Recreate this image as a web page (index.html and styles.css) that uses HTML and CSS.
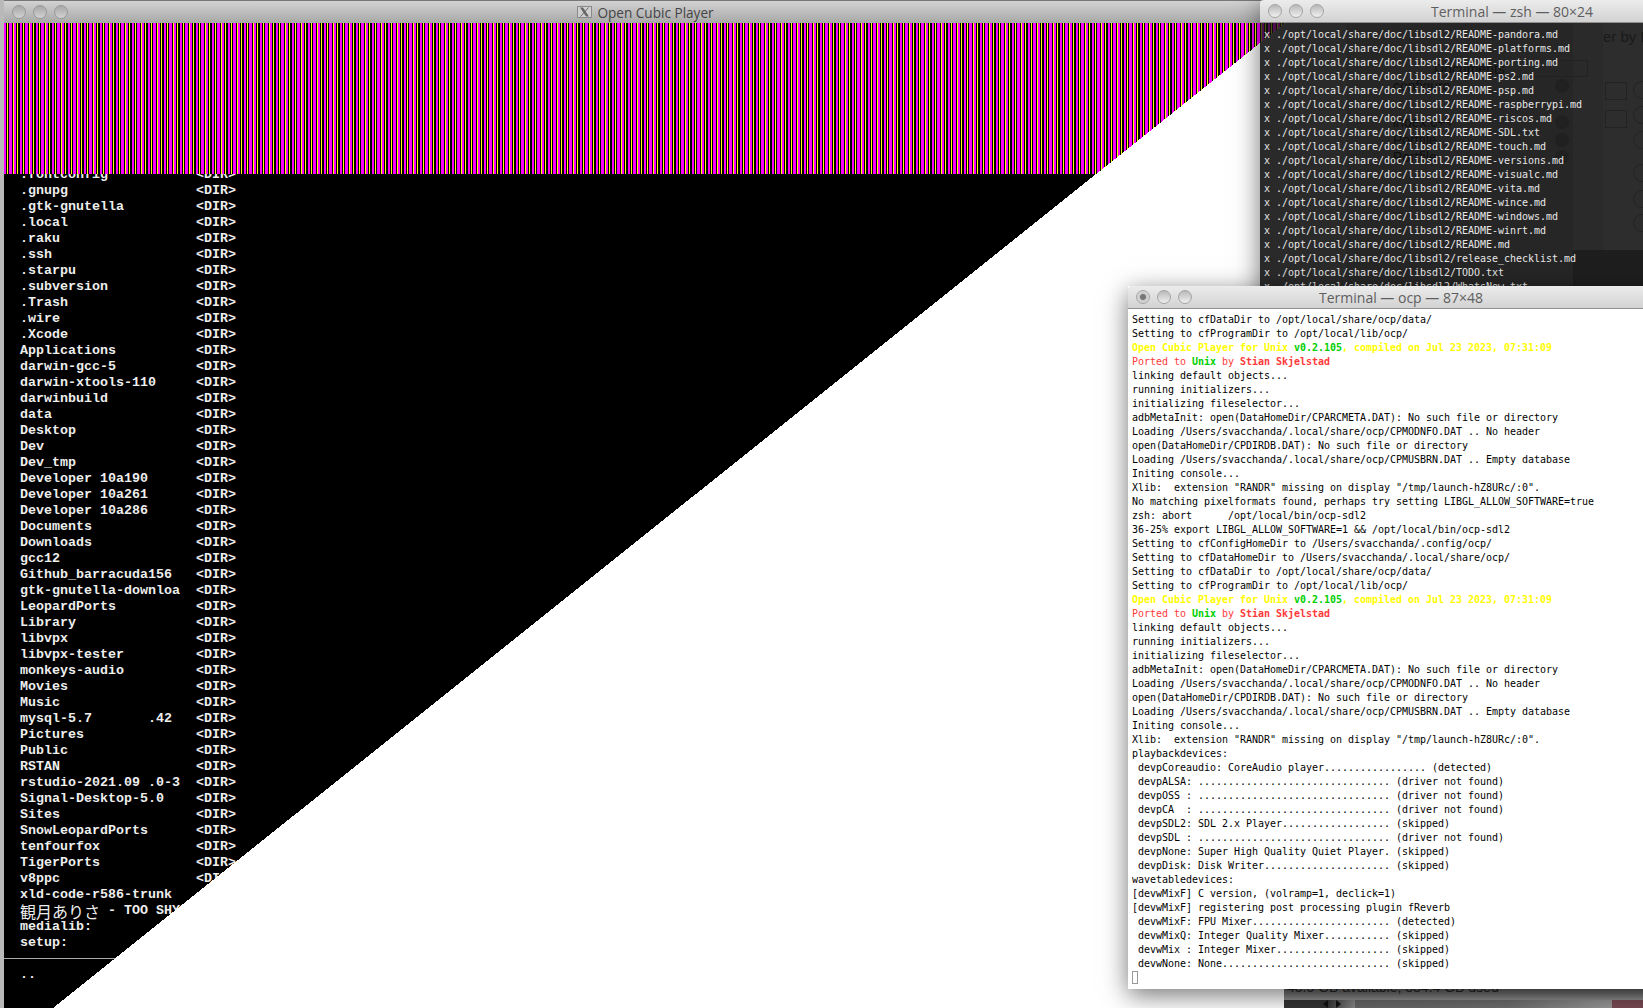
FILE: index.html
```html
<!DOCTYPE html>
<html lang="en">
<head>
    <meta charset="UTF-8">
    <title>Open Cubic Player</title>
    <link rel="stylesheet" href="styles.css">
</head>
<body>
    <!-- SDL window -->
    <div class="window main">
        <div class="titlebar main-title">
            <div class="lights">
                <span class="light"></span><span class="light"></span><span class="light"></span>
            </div>
            <svg class="x-icon" width="15" height="12" viewBox="0 0 15 12">
                <rect x="0.5" y="0.5" width="14" height="11" fill="#d0d0d0" stroke="#8a8a8a"/>
                <path d="M3 1.5 L6 1.5 L12 10.5 L9 10.5 Z" fill="#666"/>
                <path d="M11.5 1.5 L3.5 10.5" stroke="#666" stroke-width="1" fill="none"/>
            </svg>
            <span class="title-text">Open Cubic Player</span>
        </div>
        <div class="stripes"></div>
        <div class="listing">
            <div class="row"><span class="name">.fontconfig</span><span>&lt;DIR&gt;</span></div>
            <div class="row"><span class="name">.gnupg</span><span>&lt;DIR&gt;</span></div>
            <div class="row"><span class="name">.gtk-gnutella</span><span>&lt;DIR&gt;</span></div>
            <div class="row"><span class="name">.local</span><span>&lt;DIR&gt;</span></div>
            <div class="row"><span class="name">.raku</span><span>&lt;DIR&gt;</span></div>
            <div class="row"><span class="name">.ssh</span><span>&lt;DIR&gt;</span></div>
            <div class="row"><span class="name">.starpu</span><span>&lt;DIR&gt;</span></div>
            <div class="row"><span class="name">.subversion</span><span>&lt;DIR&gt;</span></div>
            <div class="row"><span class="name">.Trash</span><span>&lt;DIR&gt;</span></div>
            <div class="row"><span class="name">.wire</span><span>&lt;DIR&gt;</span></div>
            <div class="row"><span class="name">.Xcode</span><span>&lt;DIR&gt;</span></div>
            <div class="row"><span class="name">Applications</span><span>&lt;DIR&gt;</span></div>
            <div class="row"><span class="name">darwin-gcc-5</span><span>&lt;DIR&gt;</span></div>
            <div class="row"><span class="name">darwin-xtools-110</span><span>&lt;DIR&gt;</span></div>
            <div class="row"><span class="name">darwinbuild</span><span>&lt;DIR&gt;</span></div>
            <div class="row"><span class="name">data</span><span>&lt;DIR&gt;</span></div>
            <div class="row"><span class="name">Desktop</span><span>&lt;DIR&gt;</span></div>
            <div class="row"><span class="name">Dev</span><span>&lt;DIR&gt;</span></div>
            <div class="row"><span class="name">Dev_tmp</span><span>&lt;DIR&gt;</span></div>
            <div class="row"><span class="name">Developer 10a190</span><span>&lt;DIR&gt;</span></div>
            <div class="row"><span class="name">Developer 10a261</span><span>&lt;DIR&gt;</span></div>
            <div class="row"><span class="name">Developer 10a286</span><span>&lt;DIR&gt;</span></div>
            <div class="row"><span class="name">Documents</span><span>&lt;DIR&gt;</span></div>
            <div class="row"><span class="name">Downloads</span><span>&lt;DIR&gt;</span></div>
            <div class="row"><span class="name">gcc12</span><span>&lt;DIR&gt;</span></div>
            <div class="row"><span class="name">Github_barracuda156</span><span>&lt;DIR&gt;</span></div>
            <div class="row"><span class="name">gtk-gnutella-downloa</span><span>&lt;DIR&gt;</span></div>
            <div class="row"><span class="name">LeopardPorts</span><span>&lt;DIR&gt;</span></div>
            <div class="row"><span class="name">Library</span><span>&lt;DIR&gt;</span></div>
            <div class="row"><span class="name">libvpx</span><span>&lt;DIR&gt;</span></div>
            <div class="row"><span class="name">libvpx-tester</span><span>&lt;DIR&gt;</span></div>
            <div class="row"><span class="name">monkeys-audio</span><span>&lt;DIR&gt;</span></div>
            <div class="row"><span class="name">Movies</span><span>&lt;DIR&gt;</span></div>
            <div class="row"><span class="name">Music</span><span>&lt;DIR&gt;</span></div>
            <div class="row"><span class="name">mysql-5.7       .42</span><span>&lt;DIR&gt;</span></div>
            <div class="row"><span class="name">Pictures</span><span>&lt;DIR&gt;</span></div>
            <div class="row"><span class="name">Public</span><span>&lt;DIR&gt;</span></div>
            <div class="row"><span class="name">RSTAN</span><span>&lt;DIR&gt;</span></div>
            <div class="row"><span class="name">rstudio-2021.09 .0-3</span><span>&lt;DIR&gt;</span></div>
            <div class="row"><span class="name">Signal-Desktop-5.0</span><span>&lt;DIR&gt;</span></div>
            <div class="row"><span class="name">Sites</span><span>&lt;DIR&gt;</span></div>
            <div class="row"><span class="name">SnowLeopardPorts</span><span>&lt;DIR&gt;</span></div>
            <div class="row"><span class="name">tenfourfox</span><span>&lt;DIR&gt;</span></div>
            <div class="row"><span class="name">TigerPorts</span><span>&lt;DIR&gt;</span></div>
            <div class="row"><span class="name">v8ppc</span><span>&lt;DIR&gt;</span></div>
            <div class="row"><span class="name">xld-code-r586-trunk</span></div>
            <div class="row"><span class="name"><span class="cjk">観月ありさ</span> - TOO SHY</span></div>
            <div class="row"><span class="name">medialib:</span></div>
            <div class="row"><span class="name">setup:</span></div>
            <div class="rule"></div>
            <div class="row"><span class="name">..</span></div>
        </div>
    </div>

    <!-- the black/striped surface is only half drawn -->
    <svg class="wipe" width="1643" height="1008" viewBox="0 0 1643 1008">
        <polygon points="1285,23 1643,23 1643,1008 53,1008" fill="#fff" shape-rendering="crispEdges"/>
    </svg>

    <!-- window behind the dark terminal, seen through it -->
    <div class="finder">
        <div class="ghost ghost-pane"></div>
        <div class="ghost ghost-right"></div>
        <div class="ghost ghost-low"></div>
        <div class="ghost ghost-field">Documents</div>
        <div class="ghost ghost-file file-1">configure</div>
        <div class="ghost ghost-file file-2">index.c++</div>
        <div class="ghost ghost-file file-3">Portfile</div>
        <div class="ghost ghost-file file-4">Portfile</div>
        <div class="ghost ghost-del del-1"></div>
        <div class="ghost ghost-del del-2"></div>
        <div class="ghost ghost-del del-3"></div>
        <div class="ghost ghost-del del-4"></div>
        <div class="ghost ghost-sort">er by N</div>
        <div class="ghost ghost-select select-1"></div>
        <div class="ghost ghost-select select-2"></div>
        <div class="ghost ghost-round round-1"></div>
        <div class="ghost ghost-round round-2"></div>
        <div class="ghost ghost-round round-3"></div>
        <div class="ghost ghost-round round-4"></div>
        <div class="ghost ghost-round round-5"></div>
        <div class="ghost ghost-round round-6"></div>
        <div class="status">43.5 GB available, 334.4 GB used</div>
        <div class="scrollbar">
            <div class="scroll-arrows"><span class="arrow-left"></span><span class="arrow-right"></span></div>
            <div class="scroll-track"></div>
            <div class="scroll-end"></div>
        </div>
    </div>

    <div class="window term term-back">
        <div class="titlebar term-title">
            <div class="lights">
                <span class="light"></span><span class="light"></span><span class="light"></span>
            </div>
            <span class="title-text">Terminal — zsh — 80×24</span>
        </div>
<pre class="term-body dark">x ./opt/local/share/doc/libsdl2/README-pandora.md
x ./opt/local/share/doc/libsdl2/README-platforms.md
x ./opt/local/share/doc/libsdl2/README-porting.md
x ./opt/local/share/doc/libsdl2/README-ps2.md
x ./opt/local/share/doc/libsdl2/README-psp.md
x ./opt/local/share/doc/libsdl2/README-raspberrypi.md
x ./opt/local/share/doc/libsdl2/README-riscos.md
x ./opt/local/share/doc/libsdl2/README-SDL.txt
x ./opt/local/share/doc/libsdl2/README-touch.md
x ./opt/local/share/doc/libsdl2/README-versions.md
x ./opt/local/share/doc/libsdl2/README-visualc.md
x ./opt/local/share/doc/libsdl2/README-vita.md
x ./opt/local/share/doc/libsdl2/README-wince.md
x ./opt/local/share/doc/libsdl2/README-windows.md
x ./opt/local/share/doc/libsdl2/README-winrt.md
x ./opt/local/share/doc/libsdl2/README.md
x ./opt/local/share/doc/libsdl2/release_checklist.md
x ./opt/local/share/doc/libsdl2/TODO.txt
x ./opt/local/share/doc/libsdl2/WhatsNew.txt</pre>
    </div>

    <div class="window term term-front">
        <div class="titlebar term-title">
            <div class="lights">
                <span class="light light-dot"></span><span class="light"></span><span class="light"></span>
            </div>
            <span class="title-text">Terminal — ocp — 87×48</span>
        </div>
<pre class="term-body">Setting to cfDataDir to /opt/local/share/ocp/data/
Setting to cfProgramDir to /opt/local/lib/ocp/
<b class="yellow">Open Cubic Player for Unix <span class="green">v0.2.105</span>, compiled on Jul 23 2023, 07:31:09</b>
<span class="red">Ported to <b class="green">Unix</b> by <b>Stian Skjelstad</b></span>
linking default objects...
running initializers...
initializing fileselector...
adbMetaInit: open(DataHomeDir/CPARCMETA.DAT): No such file or directory
Loading /Users/svacchanda/.local/share/ocp/CPMODNFO.DAT .. No header
open(DataHomeDir/CPDIRDB.DAT): No such file or directory
Loading /Users/svacchanda/.local/share/ocp/CPMUSBRN.DAT .. Empty database
Initing console...
Xlib:  extension "RANDR" missing on display "/tmp/launch-hZ8URc/:0".
No matching pixelformats found, perhaps try setting LIBGL_ALLOW_SOFTWARE=true
zsh: abort      /opt/local/bin/ocp-sdl2
36-25% export LIBGL_ALLOW_SOFTWARE=1 &amp;&amp; /opt/local/bin/ocp-sdl2
Setting to cfConfigHomeDir to /Users/svacchanda/.config/ocp/
Setting to cfDataHomeDir to /Users/svacchanda/.local/share/ocp/
Setting to cfDataDir to /opt/local/share/ocp/data/
Setting to cfProgramDir to /opt/local/lib/ocp/
<b class="yellow">Open Cubic Player for Unix <span class="green">v0.2.105</span>, compiled on Jul 23 2023, 07:31:09</b>
<span class="red">Ported to <b class="green">Unix</b> by <b>Stian Skjelstad</b></span>
linking default objects...
running initializers...
initializing fileselector...
adbMetaInit: open(DataHomeDir/CPARCMETA.DAT): No such file or directory
Loading /Users/svacchanda/.local/share/ocp/CPMODNFO.DAT .. No header
open(DataHomeDir/CPDIRDB.DAT): No such file or directory
Loading /Users/svacchanda/.local/share/ocp/CPMUSBRN.DAT .. Empty database
Initing console...
Xlib:  extension "RANDR" missing on display "/tmp/launch-hZ8URc/:0".
playbackdevices:
 devpCoreaudio: CoreAudio player................. (detected)
 devpALSA: ................................ (driver not found)
 devpOSS : ................................ (driver not found)
 devpCA  : ................................ (driver not found)
 devpSDL2: SDL 2.x Player.................. (skipped)
 devpSDL : ................................ (driver not found)
 devpNone: Super High Quality Quiet Player. (skipped)
 devpDisk: Disk Writer..................... (skipped)
wavetabledevices:
[devwMixF] C version, (volramp=1, declick=1)
[devwMixF] registering post processing plugin fReverb
 devwMixF: FPU Mixer....................... (detected)
 devwMixQ: Integer Quality Mixer........... (skipped)
 devwMix : Integer Mixer................... (skipped)
 devwNone: None............................ (skipped)
<span class="cursor"></span></pre>
    </div>
</body>
</html>
```

FILE: styles.css
```css
html, body {
    margin: 0;
    padding: 0;
    height: 100%;
    overflow: hidden;
    background: #fff;
}
.window {
    position: absolute;
    overflow: hidden;
}
.titlebar {
    position: relative;
    display: flex;
    align-items: center;
    justify-content: center;
    gap: 5px;
    height: 23px;
    box-sizing: border-box;
    font-family: "Open Sans", sans-serif;
    font-size: 14px;
    color: #5e5e5e;
}
.lights {
    position: absolute;
    left: 8px;
    top: 5px;
    display: flex;
    gap: 7px;
}
.light {
    display: block;
    width: 14px;
    height: 14px;
    box-sizing: border-box;
    border: 1px solid #a4a4a4;
    border-radius: 50%;
    background: linear-gradient(#b8b8b8, #f0f0f0);
}
.light-dot {
    background: radial-gradient(circle, #777 0, #777 2.5px, #c8c8c8 3.5px, #e8e8e8 100%);
}

/* sdl window */
.main {
    left: 0;
    top: 0;
    width: 1285px;
    height: 1008px;
    box-sizing: border-box;
    border-left: 4px solid #b9b9b9;
    background: #000;
}
.main-title {
    background: linear-gradient(#d2d2d2, #a8a8a8);
    border-top: 1px solid #777;
    padding-left: 2px;
    font-size: 13.6px;
    color: #444;
}
.main-title .lights {
    left: 8px;
    top: 4px;
}
.main-title .light {
    border-color: #999;
    background: linear-gradient(#a8a8a8, #d2d2d2);
}
/* 16px tile, three bars of 5, 5 and 6 pixels */
.stripes {
    position: relative;
    height: 151px;
    margin-bottom: -7px;
    background-size: 16px 100%;
    background-image: linear-gradient(90deg,
        #f0f 0, #f0f 2px, #000 2px, #000 3px, #ff0 3px, #ff0 4px, #000 4px, #000 5px,
        #f0f 5px, #f0f 8px, #000 8px, #000 9px, #ff0 9px, #ff0 10px,
        #f0f 10px, #f0f 12px, #000 12px, #000 13px, #ff0 13px, #ff0 14px, #000 14px, #000 16px);
}
.listing {
    padding-left: 16px;
    font-family: "Liberation Mono", monospace;
    font-size: 13.33px;
    font-weight: bold;
    line-height: 16px;
    color: #eee;
}
.row {
    display: flex;
    height: 16px;
}
.name {
    width: 176px;
    flex: none;
    white-space: pre;
}
.cjk {
    display: inline-block;
    height: 16px;
    font-family: "Noto Sans CJK JP", sans-serif;
    font-size: 16px;
    font-weight: normal;
    line-height: 16px;
    vertical-align: top;
}
.rule {
    height: 1px;
    margin: 7px 0 8px -16px;
    background: #aaa;
}
.wipe {
    position: absolute;
    left: 0;
    top: 0;
}

/* window behind the terminals, colours get darkened by .dark on top */
.finder {
    position: absolute;
    left: 1260px;
    top: 23px;
    width: 383px;
    height: 985px;
    display: flex;
    flex-direction: column;
    justify-content: flex-end;
    overflow: hidden;
    background: #6c6c6c;
    clip-path: polygon(25px 0, 100% 0, 100% 100%, 24px 100%, 24px 300px, 0 300px, 0 20px);
}
.ghost {
    position: absolute;
    box-sizing: border-box;
    font-family: "Liberation Sans", sans-serif;
    font-size: 14px;
    line-height: 16px;
    color: #000;
    white-space: nowrap;
}
.ghost-pane {
    left: 86px;
    top: 0;
    width: 227px;
    height: 263px;
    background: #5c5c5c;
}
.ghost-right {
    left: 343px;
    top: 0;
    width: 40px;
    height: 227px;
    background: #787878;
}
.ghost-low {
    left: 313px;
    top: 227px;
    width: 70px;
    height: 40px;
    background: #3c3c3c;
}
.ghost-field {
    left: 173px;
    top: 37px;
    width: 155px;
    height: 17px;
    border: 1px solid #4c4c4c;
}
.ghost-file {
    left: 133px;
}
.file-1 { top: 55px; }
.file-2 { top: 91px; }
.file-3 { top: 109px; }
.file-4 { top: 126px; }
.ghost-del {
    left: 295px;
    width: 14px;
    height: 14px;
    border-radius: 50%;
    background: #444;
}
.del-1 { top: 56px; }
.del-2 { top: 92px; }
.del-3 { top: 110px; }
.del-4 { top: 127px; }
.ghost-sort {
    left: 343px;
    top: 6px;
    font-size: 15px;
    color: #2c2c2c;
}
.ghost-select {
    left: 345px;
    width: 22px;
    height: 18px;
    border: 1px solid #4c4c4c;
}
.select-1 { top: 59px; }
.select-2 { top: 87px; }
.ghost-round {
    left: 373px;
    width: 18px;
    height: 18px;
    border: 1px solid #4c4c4c;
    border-radius: 50%;
}
.round-1 { top: 58px; }
.round-2 { top: 83px; }
.round-3 { top: 108px; }
.round-4 { top: 141px; }
.round-5 { top: 167px; }
.round-6 { top: 191px; }
.status {
    margin-left: 24px;
    height: 25px;
    padding: 4px 0 0 3px;
    box-sizing: border-box;
    background: linear-gradient(#5a5a5a 50%, #929292);
    font-family: "Liberation Sans", sans-serif;
    font-size: 14px;
    line-height: 16px;
    color: #222;
}
.scrollbar {
    display: flex;
    margin-left: 24px;
    height: 8px;
    flex: none;
}
.scroll-arrows {
    display: flex;
    align-items: center;
    justify-content: flex-end;
    gap: 8px;
    width: 71px;
    padding-right: 14px;
    box-sizing: border-box;
    background: linear-gradient(90deg, #333 60%, #888);
}
.arrow-left, .arrow-right {
    width: 0;
    height: 0;
    border-top: 4px solid transparent;
    border-bottom: 4px solid transparent;
}
.arrow-left { border-right: 5px solid #111; }
.arrow-right { border-left: 5px solid #111; }
.scroll-track {
    flex: 1;
    background: linear-gradient(90deg, #666, #6e6e6e 60%, #9a9a9a);
}
.scroll-end {
    width: 31px;
    background: #7b4b55;
}

/* terminals */
.term {
    box-shadow: 0 6px 24px rgba(0, 0, 0, 0.55);
    overflow: visible;
}
.term-back {
    left: 1260px;
    top: 0;
    width: 500px;
    height: 400px;
}
.term-front {
    left: 1128px;
    top: 286px;
    width: 600px;
    height: 703px;
    background: #fff;
}
.term-title {
    background: linear-gradient(#ececec, #d2d2d2);
    border-bottom: 1px solid #8f8f8f;
    border-radius: 4px 4px 0 0;
    justify-content: flex-start;
}
.term-back .title-text { margin-left: 171px; }
.term-front .title-text { margin-left: 191px; }
.term-title .lights { left: 8px; top: 4px; }
.term-body {
    margin: 0;
    padding: 4px 0 0 4px;
    font-family: "DejaVu Sans Mono", monospace;
    font-size: 10px;
    letter-spacing: -0.02px;
    line-height: 14px;
    color: #000;
}
.term-body b {
    font-weight: bold;
}
.term-body.dark {
    height: 377px;
    box-sizing: border-box;
    padding-top: 5px;
    background: rgba(20, 20, 20, 0.75);
    color: #e8e8e8;
}
.yellow { color: #ff0; }
.green { color: #00d000; }
.red { color: #ff3a3a; }
.cursor {
    display: inline-block;
    width: 6px;
    height: 13px;
    box-sizing: border-box;
    border: 1px solid #999;
    vertical-align: top;
}
```
